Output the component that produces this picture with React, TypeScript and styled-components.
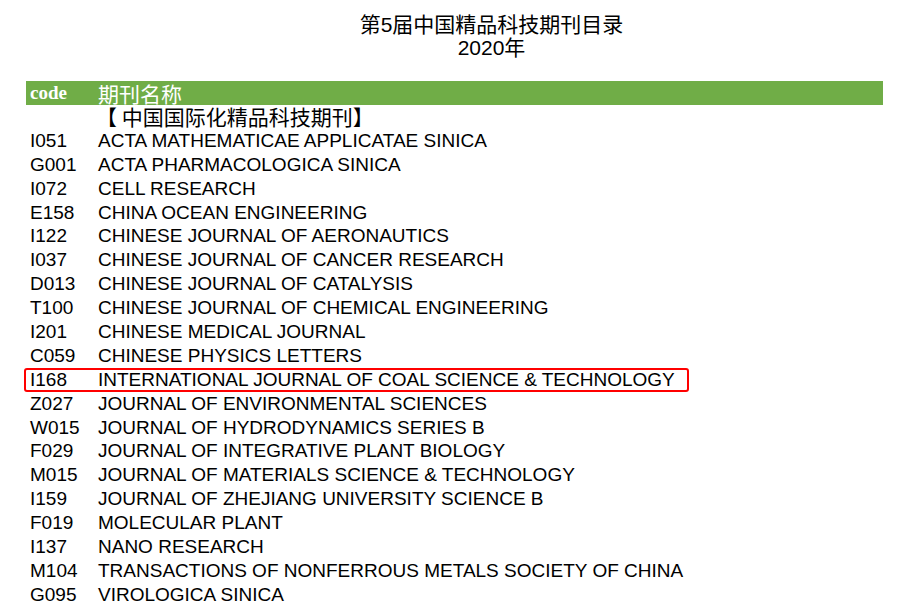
import styled, { createGlobalStyle } from 'styled-components';

const GlobalStyle = createGlobalStyle`
  body {
    margin: 0;
    background: #fff;
    color: #000;
  }
`;

const CODE_W = 72;
const ROW_H = 23.9;

const journals: [string, string][] = [
  ['I051', 'ACTA MATHEMATICAE APPLICATAE SINICA'],
  ['G001', 'ACTA PHARMACOLOGICA SINICA'],
  ['I072', 'CELL RESEARCH'],
  ['E158', 'CHINA OCEAN ENGINEERING'],
  ['I122', 'CHINESE JOURNAL OF AERONAUTICS'],
  ['I037', 'CHINESE JOURNAL OF CANCER RESEARCH'],
  ['D013', 'CHINESE JOURNAL OF CATALYSIS'],
  ['T100', 'CHINESE JOURNAL OF CHEMICAL ENGINEERING'],
  ['I201', 'CHINESE MEDICAL JOURNAL'],
  ['C059', 'CHINESE PHYSICS LETTERS'],
  ['I168', 'INTERNATIONAL JOURNAL OF COAL SCIENCE & TECHNOLOGY'],
  ['Z027', 'JOURNAL OF ENVIRONMENTAL SCIENCES'],
  ['W015', 'JOURNAL OF HYDRODYNAMICS SERIES B'],
  ['F029', 'JOURNAL OF INTEGRATIVE PLANT BIOLOGY'],
  ['M015', 'JOURNAL OF MATERIALS SCIENCE & TECHNOLOGY'],
  ['I159', 'JOURNAL OF ZHEJIANG UNIVERSITY SCIENCE B'],
  ['F019', 'MOLECULAR PLANT'],
  ['I137', 'NANO RESEARCH'],
  ['M104', 'TRANSACTIONS OF NONFERROUS METALS SOCIETY OF CHINA'],
  ['G095', 'VIROLOGICA SINICA'],
];

const Page = styled.div`
  padding: 13px 22px 0 26px;
  width: 857px;
`;

const Heading = styled.div`
  padding-left: 74px;
  text-align: center;
  font-family: 'Liberation Sans', 'Noto Sans CJK SC', sans-serif;
  font-size: 21px;
  line-height: 23px;
  margin-bottom: 22px;
`;

const HeaderBar = styled.div`
  display: flex;
  height: 24px;
  align-items: center;
  background: #70ad47;
  color: #fff;
`;

const HeadCode = styled.div`
  width: ${CODE_W}px;
  padding-left: 4px;
  box-sizing: border-box;
  font-family: 'Liberation Serif', serif;
  font-weight: bold;
  font-size: 19px;
`;

const HeadTitle = styled.div`
  font-family: 'Noto Sans CJK SC', sans-serif;
  font-size: 21px;
  line-height: 21px;
`;

const Row = styled.div<{ $marked?: boolean }>`
  display: flex;
  align-items: center;
  height: ${ROW_H}px;
  box-sizing: border-box;
  ${(p) =>
    p.$marked &&
    `
    width: fit-content;
    margin-left: -2px;
    padding-right: 12px;
    border: 2px solid #f00;
    border-radius: 3px;
  `}
`;

const Code = styled.div`
  width: ${CODE_W}px;
  padding-left: 4px;
  box-sizing: border-box;
  font-family: 'Liberation Sans', sans-serif;
  font-size: 19px;
`;

const Title = styled.div`
  font-family: 'Liberation Sans', sans-serif;
  font-size: 19px;
  white-space: nowrap;
`;

const Category = styled.div`
  font-family: 'Noto Sans CJK SC', sans-serif;
  font-size: 21px;
  line-height: 21px;
  margin-left: -2px;
  white-space: pre;
`;

export default function App() {
  return (
    <Page>
      <GlobalStyle />
      <Heading>
        第5届中国精品科技期刊目录
        <br />
        2020年
      </Heading>
      <HeaderBar>
        <HeadCode>code</HeadCode>
        <HeadTitle>期刊名称</HeadTitle>
      </HeaderBar>
      <Row>
        <Code />
        <Category>【 中国国际化精品科技期刊】</Category>
      </Row>
      {journals.map(([code, name]) => {
        const marked = code === 'I168';
        return (
          <Row key={code} $marked={marked}>
            <Code>{code}</Code>
            <Title>{name}</Title>
          </Row>
        );
      })}
    </Page>
  );
}
